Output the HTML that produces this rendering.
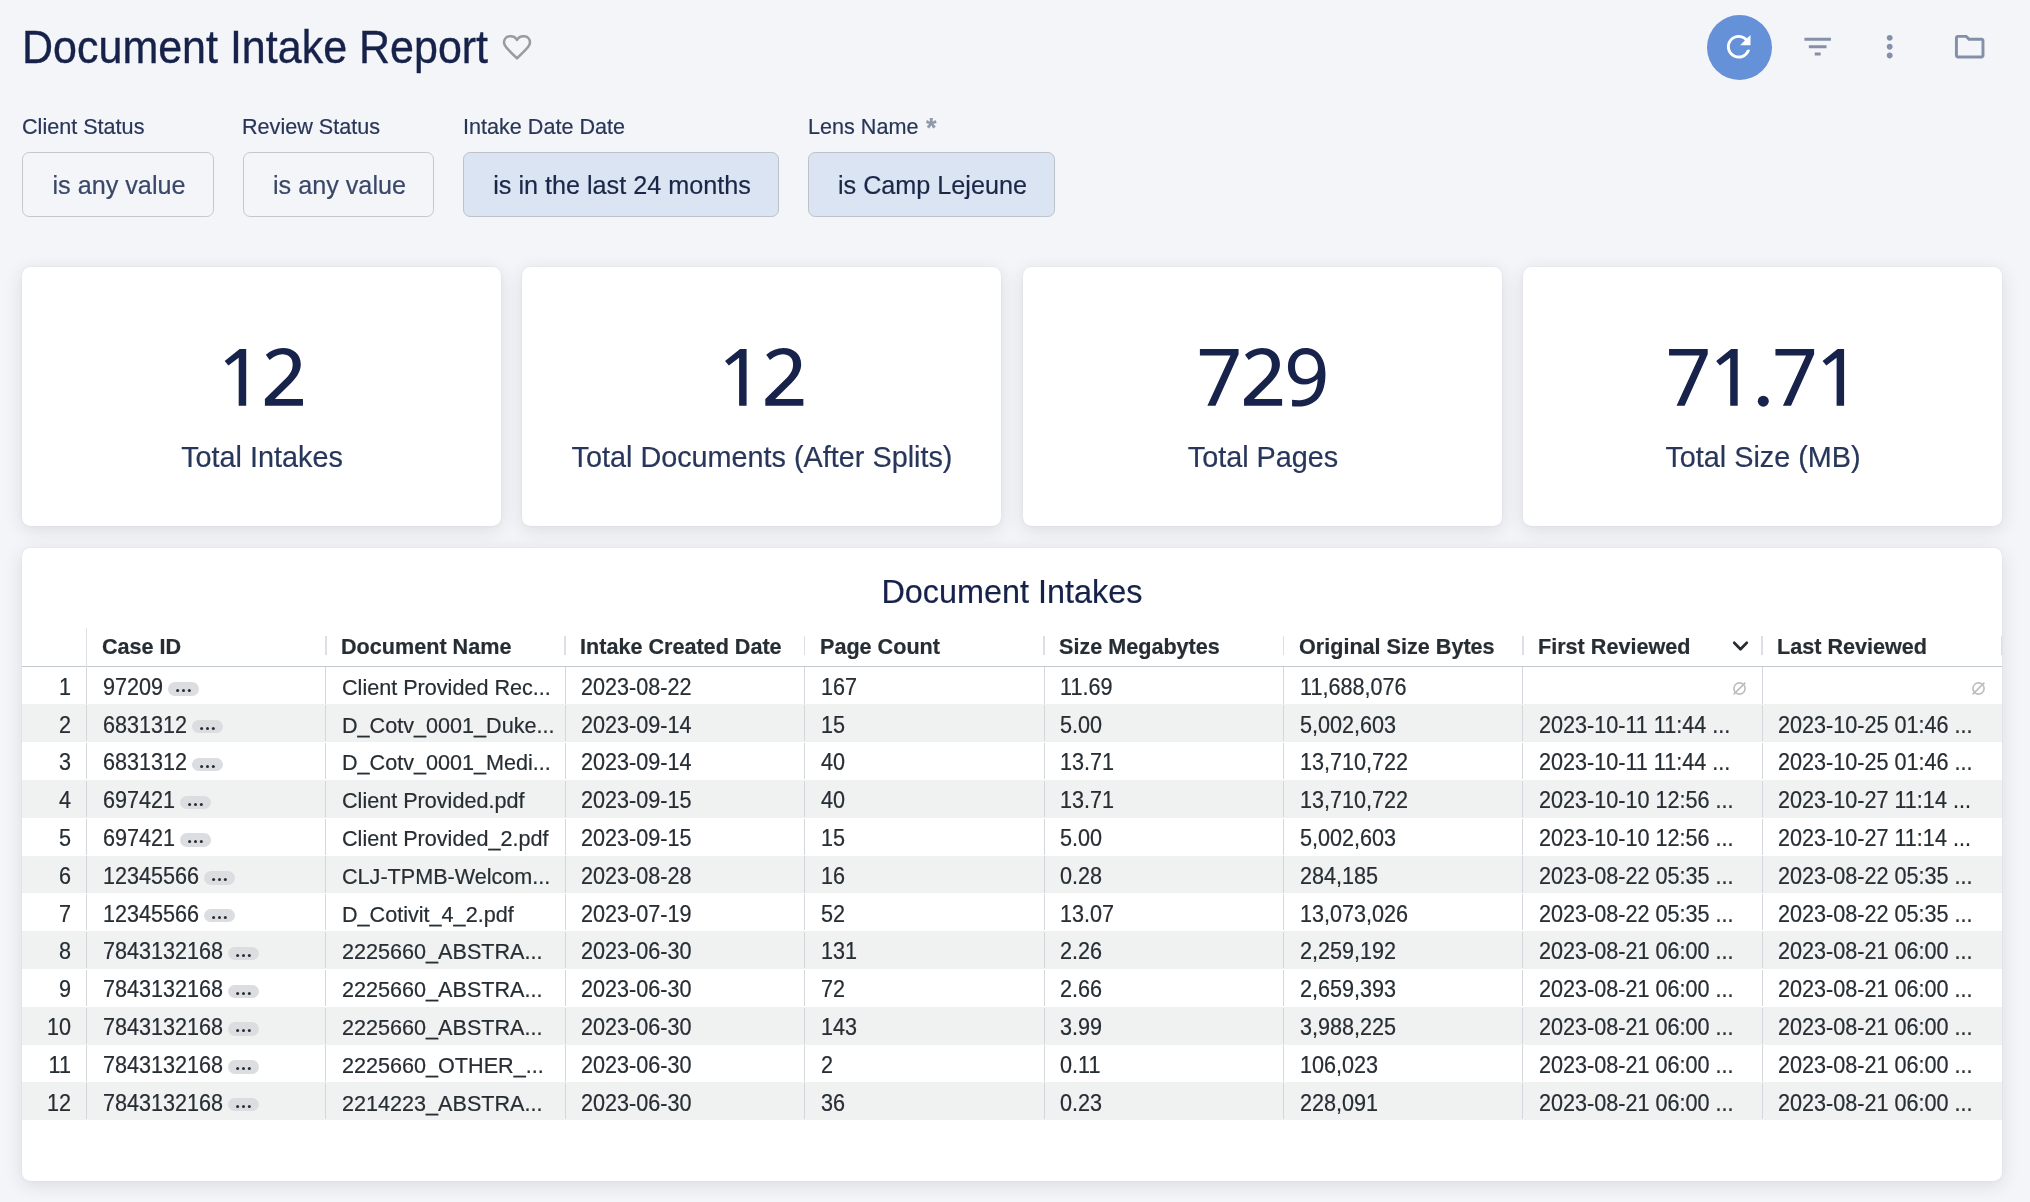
<!DOCTYPE html>
<html><head><meta charset="utf-8"><title>Document Intake Report</title>
<style>
*{box-sizing:border-box;margin:0;padding:0}
html,body{width:2030px;height:1202px;overflow:hidden;background:#f4f5f8;font-family:"Liberation Sans",sans-serif;}
.t{position:absolute;white-space:nowrap;will-change:transform;-webkit-text-stroke-width:0.2px;}
.abs{position:absolute;}
.card{position:absolute;background:#fff;border-radius:8.4px;box-shadow:0 4px 18px rgba(40,45,75,0.12),0 0 2px rgba(40,45,75,0.10);}
.fbox{position:absolute;border-radius:7.2px;border:1.8px solid #c3c7ce;}
.row{position:absolute;left:22px;width:1980px;}
.vs{position:absolute;width:1.1px;background:#d3d7db;}
</style></head>
<body>
<div class="t " style="left:22.20px;top:26.60px;font-size:43.0px;line-height:43.0px;color:#17224a;font-weight:normal;transform:scaleY(1.055);transform-origin:0 36.40px;-webkit-text-stroke:0.35px #17224a;">Document Intake Report</div>
<svg class="abs" style="left:502px;top:33px" width="30" height="28" viewBox="0 0 30 28"><path d="M15 7.0 C13.4 4.0 10.2 3.0 7.4 3.3 C3.8 3.7 2.0 6.6 2.0 9.6 C2.0 12.2 3.4 14.2 15 25.3 C26.6 14.2 28.0 12.2 28.0 9.6 C28.0 6.6 26.2 3.7 22.6 3.3 C19.8 3.0 16.6 4.0 15 7.0 Z" fill="none" stroke="#9b9b9b" stroke-width="2.6" stroke-linejoin="round"/></svg>
<div class="abs" style="left:1707px;top:15px;width:65px;height:65px;border-radius:50%;background:#6591d8"></div>
<svg class="abs" style="left:1721.00px;top:28.70px" width="35.40" height="35.40" viewBox="0 0 24 24"><path fill="#fff" d="M17.65 6.35C16.2 4.9 14.21 4 12 4c-4.42 0-7.99 3.58-7.99 8s3.57 8 7.99 8c3.73 0 6.840-2.55 7.73-6h-2.08c-.82 2.33-3.04 4-5.65 4-3.31 0-6-2.69-6-6s2.69-6 6-6c1.66 0 3.14.69 4.22 1.78L13 11h7V4l-2.35 2.35z"/></svg>
<svg class="abs" style="left:1800.20px;top:29.20px" width="35.40" height="35.40" viewBox="0 0 24 24"><path fill="#8490a8" d="M10 18h4v-2h-4v2zM3 6v2h18V6H3zm3 7h12v-2H6v2z"/></svg>
<svg class="abs" style="left:1872.30px;top:29.30px" width="35.40" height="35.40" viewBox="0 0 24 24"><path fill="#8490a8" d="M12 8c1.1 0 2-.9 2-2s-.9-2-2-2-2 .9-2 2 .9 2 2 2zm0 2c-1.1 0-2 .9-2 2s.9 2 2 2 2-.9 2-2-.9-2-2-2zm0 6c-1.1 0-2 .9-2 2s.9 2 2 2 2-.9 2-2-.9-2-2-2z"/></svg>
<svg class="abs" style="left:1952.30px;top:29.30px" width="35.40" height="35.40" viewBox="0 0 24 24"><path fill="#8490a8" d="M9.17 6l2 2H20v10H4V6h5.17M10 4H4c-1.1 0-1.99.9-1.99 2L2 18c0 1.1.9 2 2 2h16c1.1 0 2-.9 2-2V8c0-1.1-.9-2-2-2h-8l-2-2z"/></svg>
<div class="t " style="left:21.60px;top:116.02px;font-size:21.6px;line-height:21.6px;color:#283658;font-weight:normal;transform:scaleY(1.045);transform-origin:0 18.28px;">Client Status</div>
<div class="t " style="left:242.00px;top:116.02px;font-size:21.6px;line-height:21.6px;color:#283658;font-weight:normal;transform:scaleY(1.045);transform-origin:0 18.28px;">Review Status</div>
<div class="t " style="left:462.80px;top:116.02px;font-size:21.6px;line-height:21.6px;color:#283658;font-weight:normal;transform:scaleY(1.045);transform-origin:0 18.28px;">Intake Date Date</div>
<div class="t " style="left:807.80px;top:116.02px;font-size:21.6px;line-height:21.6px;color:#283658;font-weight:normal;transform:scaleY(1.045);transform-origin:0 18.28px;">Lens Name</div>
<div class="t " style="left:926.00px;top:114.64px;font-size:27px;line-height:27px;color:#8f98ab;font-weight:bold;">*</div>
<div class="fbox" style="left:22px;top:152px;width:192px;height:65px;background:transparent;border-color:#c3c7ce"></div>
<div class="t" style="left:22.80px;width:192px;text-align:center;top:173.27px;font-size:25.2px;line-height:25.2px;color:#394868;font-weight:normal;transform:scaleY(1.045);transform-origin:0 21.33px;">is any value</div>
<div class="fbox" style="left:243px;top:152px;width:191px;height:65px;background:transparent;border-color:#c3c7ce"></div>
<div class="t" style="left:243.80px;width:191px;text-align:center;top:173.27px;font-size:25.2px;line-height:25.2px;color:#394868;font-weight:normal;transform:scaleY(1.045);transform-origin:0 21.33px;">is any value</div>
<div class="fbox" style="left:463px;top:152px;width:316px;height:65px;background:#dbe4f3;border-color:#bdc1c8"></div>
<div class="t" style="left:463.80px;width:316px;text-align:center;top:173.27px;font-size:25.2px;line-height:25.2px;color:#1a2747;font-weight:normal;transform:scaleY(1.045);transform-origin:0 21.33px;">is in the last 24 months</div>
<div class="fbox" style="left:808px;top:152px;width:247px;height:65px;background:#dbe4f3;border-color:#bdc1c8"></div>
<div class="t" style="left:808.80px;width:247px;text-align:center;top:173.27px;font-size:25.2px;line-height:25.2px;color:#1a2747;font-weight:normal;transform:scaleY(1.045);transform-origin:0 21.33px;">is Camp Lejeune</div>
<div class="card" style="left:22.00px;top:267px;width:478.8px;height:259px"></div>
<div class="t" style="left:26.70px;width:470px;text-align:center;top:442.62px;font-size:28.8px;line-height:28.8px;color:#27365a;font-weight:normal;transform:scaleY(1.045);transform-origin:0 24.38px;">Total Intakes</div>
<div class="card" style="left:522.40px;top:267px;width:478.8px;height:259px"></div>
<div class="t" style="left:527.10px;width:470px;text-align:center;top:442.62px;font-size:28.8px;line-height:28.8px;color:#27365a;font-weight:normal;transform:scaleY(1.045);transform-origin:0 24.38px;">Total Documents (After Splits)</div>
<div class="card" style="left:1022.80px;top:267px;width:478.8px;height:259px"></div>
<div class="t" style="left:1027.50px;width:470px;text-align:center;top:442.62px;font-size:28.8px;line-height:28.8px;color:#27365a;font-weight:normal;transform:scaleY(1.045);transform-origin:0 24.38px;">Total Pages</div>
<div class="card" style="left:1523.20px;top:267px;width:478.8px;height:259px"></div>
<div class="t" style="left:1527.90px;width:470px;text-align:center;top:442.62px;font-size:28.8px;line-height:28.8px;color:#27365a;font-weight:normal;transform:scaleY(1.045);transform-origin:0 24.38px;">Total Size (MB)</div>
<svg class="abs" style="left:0;top:0" width="2030" height="1202" viewBox="0 0 2030 1202"><g fill="#17234a" fill-rule="evenodd"><path transform="translate(246.19 405.81) scale(0.06238)" d="M-105 -910 L0 -910 L0 0 L-120 0 L-120 -770 L-285 -645 L-345 -720 Z"/><path transform="translate(264.91 405.81) scale(0.06238)" d="M0 0 L610 0 L610 -110 L160 -110 L420 -365 C530 -475 575 -565 575 -665 C575 -830 450 -925 290 -925 C190 -925 100 -885 15 -820 L75 -735 C150 -790 210 -825 280 -825 C380 -825 445 -765 445 -665 C445 -575 410 -515 350 -455 L0 -110 Z"/><path transform="translate(746.59 405.81) scale(0.06238)" d="M-105 -910 L0 -910 L0 0 L-120 0 L-120 -770 L-285 -645 L-345 -720 Z"/><path transform="translate(765.31 405.81) scale(0.06238)" d="M0 0 L610 0 L610 -110 L160 -110 L420 -365 C530 -475 575 -565 575 -665 C575 -830 450 -925 290 -925 C190 -925 100 -885 15 -820 L75 -735 C150 -790 210 -825 280 -825 C380 -825 445 -765 445 -665 C445 -575 410 -515 350 -455 L0 -110 Z"/><path transform="translate(1199.90 349.00) scale(0.06238)" d="M0 0 L620 0 L620 85 L250 910 L120 910 L490 105 L0 105 Z"/><path transform="translate(1244.05 405.81) scale(0.06238)" d="M0 0 L610 0 L610 -110 L160 -110 L420 -365 C530 -475 575 -565 575 -665 C575 -830 450 -925 290 -925 C190 -925 100 -885 15 -820 L75 -735 C150 -790 210 -825 280 -825 C380 -825 445 -765 445 -665 C445 -575 410 -515 350 -455 L0 -110 Z"/><path transform="translate(1292.08 406.13) scale(0.06238)" d="M0 0 C45 5 75 7 105 7 C385 0 535 -180 535 -520 C535 -770 405 -930 220 -930 C45 -930 -67 -800 -67 -630 C-67 -460 35 -345 190 -345 C275 -345 355 -380 410 -435 C400 -190 285 -95 95 -95 C60 -95 30 -98 0 -103 Z M220 -830 C115 -830 47 -760 47 -630 C47 -510 110 -435 215 -435 C335 -435 415 -515 415 -610 C415 -750 330 -830 220 -830 Z"/><path transform="translate(1669.05 349.05) scale(0.06238)" d="M0 0 L620 0 L620 85 L250 910 L120 910 L490 105 L0 105 Z"/><path transform="translate(1737.69 405.83) scale(0.06238)" d="M-105 -910 L0 -910 L0 0 L-120 0 L-120 -770 L-285 -645 L-345 -720 Z"/><circle cx="1763.28" cy="401.2" r="5.5"/><path transform="translate(1775.45 349.05) scale(0.06238)" d="M0 0 L620 0 L620 85 L250 910 L120 910 L490 105 L0 105 Z"/><path transform="translate(1844.09 405.83) scale(0.06238)" d="M-105 -910 L0 -910 L0 0 L-120 0 L-120 -770 L-285 -645 L-345 -720 Z"/></g></svg>
<div class="card" style="left:22px;top:547.6px;width:1980px;height:633.6px"></div>
<div class="t" style="left:712.00px;width:600px;text-align:center;top:576.47px;font-size:32.4px;line-height:32.4px;color:#17224a;font-weight:normal;transform:scaleY(1.02);transform-origin:0 27.43px;">Document Intakes</div>
<div class="row" style="top:704.40px;height:37.80px;background:#f0f2f2"></div>
<div class="row" style="top:780.00px;height:37.80px;background:#f0f2f2"></div>
<div class="row" style="top:855.60px;height:37.80px;background:#f0f2f2"></div>
<div class="row" style="top:931.20px;height:37.80px;background:#f0f2f2"></div>
<div class="row" style="top:1006.80px;height:37.80px;background:#f0f2f2"></div>
<div class="row" style="top:1082.40px;height:37.80px;background:#f0f2f2"></div>
<div class="abs" style="left:22px;top:665.8px;width:1980px;height:1.2px;background:#c3c8ce"></div>
<div class="vs" style="left:85.90px;top:667.40px;height:36.20px"></div>
<div class="vs" style="left:85.90px;top:705.20px;height:36.20px"></div>
<div class="vs" style="left:85.90px;top:743.00px;height:36.20px"></div>
<div class="vs" style="left:85.90px;top:780.80px;height:36.20px"></div>
<div class="vs" style="left:85.90px;top:818.60px;height:36.20px"></div>
<div class="vs" style="left:85.90px;top:856.40px;height:36.20px"></div>
<div class="vs" style="left:85.90px;top:894.20px;height:36.20px"></div>
<div class="vs" style="left:85.90px;top:932.00px;height:36.20px"></div>
<div class="vs" style="left:85.90px;top:969.80px;height:36.20px"></div>
<div class="vs" style="left:85.90px;top:1007.60px;height:36.20px"></div>
<div class="vs" style="left:85.90px;top:1045.40px;height:36.20px"></div>
<div class="vs" style="left:85.90px;top:1083.20px;height:36.20px"></div>
<div class="vs" style="left:325.30px;top:667.40px;height:36.20px"></div>
<div class="vs" style="left:325.30px;top:705.20px;height:36.20px"></div>
<div class="vs" style="left:325.30px;top:743.00px;height:36.20px"></div>
<div class="vs" style="left:325.30px;top:780.80px;height:36.20px"></div>
<div class="vs" style="left:325.30px;top:818.60px;height:36.20px"></div>
<div class="vs" style="left:325.30px;top:856.40px;height:36.20px"></div>
<div class="vs" style="left:325.30px;top:894.20px;height:36.20px"></div>
<div class="vs" style="left:325.30px;top:932.00px;height:36.20px"></div>
<div class="vs" style="left:325.30px;top:969.80px;height:36.20px"></div>
<div class="vs" style="left:325.30px;top:1007.60px;height:36.20px"></div>
<div class="vs" style="left:325.30px;top:1045.40px;height:36.20px"></div>
<div class="vs" style="left:325.30px;top:1083.20px;height:36.20px"></div>
<div class="vs" style="left:564.70px;top:667.40px;height:36.20px"></div>
<div class="vs" style="left:564.70px;top:705.20px;height:36.20px"></div>
<div class="vs" style="left:564.70px;top:743.00px;height:36.20px"></div>
<div class="vs" style="left:564.70px;top:780.80px;height:36.20px"></div>
<div class="vs" style="left:564.70px;top:818.60px;height:36.20px"></div>
<div class="vs" style="left:564.70px;top:856.40px;height:36.20px"></div>
<div class="vs" style="left:564.70px;top:894.20px;height:36.20px"></div>
<div class="vs" style="left:564.70px;top:932.00px;height:36.20px"></div>
<div class="vs" style="left:564.70px;top:969.80px;height:36.20px"></div>
<div class="vs" style="left:564.70px;top:1007.60px;height:36.20px"></div>
<div class="vs" style="left:564.70px;top:1045.40px;height:36.20px"></div>
<div class="vs" style="left:564.70px;top:1083.20px;height:36.20px"></div>
<div class="vs" style="left:804.10px;top:667.40px;height:36.20px"></div>
<div class="vs" style="left:804.10px;top:705.20px;height:36.20px"></div>
<div class="vs" style="left:804.10px;top:743.00px;height:36.20px"></div>
<div class="vs" style="left:804.10px;top:780.80px;height:36.20px"></div>
<div class="vs" style="left:804.10px;top:818.60px;height:36.20px"></div>
<div class="vs" style="left:804.10px;top:856.40px;height:36.20px"></div>
<div class="vs" style="left:804.10px;top:894.20px;height:36.20px"></div>
<div class="vs" style="left:804.10px;top:932.00px;height:36.20px"></div>
<div class="vs" style="left:804.10px;top:969.80px;height:36.20px"></div>
<div class="vs" style="left:804.10px;top:1007.60px;height:36.20px"></div>
<div class="vs" style="left:804.10px;top:1045.40px;height:36.20px"></div>
<div class="vs" style="left:804.10px;top:1083.20px;height:36.20px"></div>
<div class="vs" style="left:1043.50px;top:667.40px;height:36.20px"></div>
<div class="vs" style="left:1043.50px;top:705.20px;height:36.20px"></div>
<div class="vs" style="left:1043.50px;top:743.00px;height:36.20px"></div>
<div class="vs" style="left:1043.50px;top:780.80px;height:36.20px"></div>
<div class="vs" style="left:1043.50px;top:818.60px;height:36.20px"></div>
<div class="vs" style="left:1043.50px;top:856.40px;height:36.20px"></div>
<div class="vs" style="left:1043.50px;top:894.20px;height:36.20px"></div>
<div class="vs" style="left:1043.50px;top:932.00px;height:36.20px"></div>
<div class="vs" style="left:1043.50px;top:969.80px;height:36.20px"></div>
<div class="vs" style="left:1043.50px;top:1007.60px;height:36.20px"></div>
<div class="vs" style="left:1043.50px;top:1045.40px;height:36.20px"></div>
<div class="vs" style="left:1043.50px;top:1083.20px;height:36.20px"></div>
<div class="vs" style="left:1282.90px;top:667.40px;height:36.20px"></div>
<div class="vs" style="left:1282.90px;top:705.20px;height:36.20px"></div>
<div class="vs" style="left:1282.90px;top:743.00px;height:36.20px"></div>
<div class="vs" style="left:1282.90px;top:780.80px;height:36.20px"></div>
<div class="vs" style="left:1282.90px;top:818.60px;height:36.20px"></div>
<div class="vs" style="left:1282.90px;top:856.40px;height:36.20px"></div>
<div class="vs" style="left:1282.90px;top:894.20px;height:36.20px"></div>
<div class="vs" style="left:1282.90px;top:932.00px;height:36.20px"></div>
<div class="vs" style="left:1282.90px;top:969.80px;height:36.20px"></div>
<div class="vs" style="left:1282.90px;top:1007.60px;height:36.20px"></div>
<div class="vs" style="left:1282.90px;top:1045.40px;height:36.20px"></div>
<div class="vs" style="left:1282.90px;top:1083.20px;height:36.20px"></div>
<div class="vs" style="left:1522.30px;top:667.40px;height:36.20px"></div>
<div class="vs" style="left:1522.30px;top:705.20px;height:36.20px"></div>
<div class="vs" style="left:1522.30px;top:743.00px;height:36.20px"></div>
<div class="vs" style="left:1522.30px;top:780.80px;height:36.20px"></div>
<div class="vs" style="left:1522.30px;top:818.60px;height:36.20px"></div>
<div class="vs" style="left:1522.30px;top:856.40px;height:36.20px"></div>
<div class="vs" style="left:1522.30px;top:894.20px;height:36.20px"></div>
<div class="vs" style="left:1522.30px;top:932.00px;height:36.20px"></div>
<div class="vs" style="left:1522.30px;top:969.80px;height:36.20px"></div>
<div class="vs" style="left:1522.30px;top:1007.60px;height:36.20px"></div>
<div class="vs" style="left:1522.30px;top:1045.40px;height:36.20px"></div>
<div class="vs" style="left:1522.30px;top:1083.20px;height:36.20px"></div>
<div class="vs" style="left:1761.70px;top:667.40px;height:36.20px"></div>
<div class="vs" style="left:1761.70px;top:705.20px;height:36.20px"></div>
<div class="vs" style="left:1761.70px;top:743.00px;height:36.20px"></div>
<div class="vs" style="left:1761.70px;top:780.80px;height:36.20px"></div>
<div class="vs" style="left:1761.70px;top:818.60px;height:36.20px"></div>
<div class="vs" style="left:1761.70px;top:856.40px;height:36.20px"></div>
<div class="vs" style="left:1761.70px;top:894.20px;height:36.20px"></div>
<div class="vs" style="left:1761.70px;top:932.00px;height:36.20px"></div>
<div class="vs" style="left:1761.70px;top:969.80px;height:36.20px"></div>
<div class="vs" style="left:1761.70px;top:1007.60px;height:36.20px"></div>
<div class="vs" style="left:1761.70px;top:1045.40px;height:36.20px"></div>
<div class="vs" style="left:1761.70px;top:1083.20px;height:36.20px"></div>
<div class="vs" style="left:85.50px;top:627.5px;width:1.8px;height:40.10px;background:#dcdfe3"></div>
<div class="vs" style="left:324.90px;top:636px;width:1.8px;height:18.60px;background:#dcdfe3"></div>
<div class="vs" style="left:564.30px;top:636px;width:1.8px;height:18.60px;background:#dcdfe3"></div>
<div class="vs" style="left:803.70px;top:636px;width:1.8px;height:18.60px;background:#dcdfe3"></div>
<div class="vs" style="left:1043.10px;top:636px;width:1.8px;height:18.60px;background:#dcdfe3"></div>
<div class="vs" style="left:1282.50px;top:636px;width:1.8px;height:18.60px;background:#dcdfe3"></div>
<div class="vs" style="left:1521.90px;top:636px;width:1.8px;height:18.60px;background:#dcdfe3"></div>
<div class="vs" style="left:1761.30px;top:636px;width:1.8px;height:18.60px;background:#dcdfe3"></div>
<div class="vs" style="left:2000.70px;top:636px;width:1.8px;height:18.60px;background:#dcdfe3"></div>
<div class="t " style="left:101.60px;top:635.72px;font-size:21.6px;line-height:21.6px;color:#262d33;font-weight:bold;transform:scaleY(1.06);transform-origin:0 18.28px;">Case ID</div>
<div class="t " style="left:341.00px;top:635.72px;font-size:21.6px;line-height:21.6px;color:#262d33;font-weight:bold;transform:scaleY(1.06);transform-origin:0 18.28px;">Document Name</div>
<div class="t " style="left:580.40px;top:635.72px;font-size:21.6px;line-height:21.6px;color:#262d33;font-weight:bold;transform:scaleY(1.06);transform-origin:0 18.28px;">Intake Created Date</div>
<div class="t " style="left:819.80px;top:635.72px;font-size:21.6px;line-height:21.6px;color:#262d33;font-weight:bold;transform:scaleY(1.06);transform-origin:0 18.28px;">Page Count</div>
<div class="t " style="left:1059.20px;top:635.72px;font-size:21.6px;line-height:21.6px;color:#262d33;font-weight:bold;transform:scaleY(1.06);transform-origin:0 18.28px;">Size Megabytes</div>
<div class="t " style="left:1298.60px;top:635.72px;font-size:21.6px;line-height:21.6px;color:#262d33;font-weight:bold;transform:scaleY(1.06);transform-origin:0 18.28px;">Original Size Bytes</div>
<div class="t " style="left:1538.00px;top:635.72px;font-size:21.6px;line-height:21.6px;color:#262d33;font-weight:bold;transform:scaleY(1.06);transform-origin:0 18.28px;">First Reviewed</div>
<div class="t " style="left:1777.40px;top:635.72px;font-size:21.6px;line-height:21.6px;color:#262d33;font-weight:bold;transform:scaleY(1.06);transform-origin:0 18.28px;">Last Reviewed</div>
<svg class="abs" style="left:1731px;top:640px" width="19" height="14" viewBox="0 0 19 14"><path d="M3.2 2.8 L9.5 9.2 L15.8 2.8" fill="none" stroke="#262d33" stroke-width="2.7" stroke-linecap="round" stroke-linejoin="round"/></svg>
<div class="t" style="left:23.2px;width:48px;text-align:right;top:676.82px;font-size:21.6px;line-height:21.6px;color:#262d33;transform:scaleY(1.08);transform-origin:0 18.28px">1</div>
<div class="t " style="left:102.60px;top:676.82px;font-size:21.6px;line-height:21.6px;color:#262d33;font-weight:normal;transform:scaleY(1.08);transform-origin:0 18.28px;">97209</div>
<div class="abs" style="left:167.65px;top:682.20px;width:31px;height:13.4px;border-radius:7px;background:#dcdde1"></div>
<svg class="abs" style="left:167.65px;top:682.20px" width="31" height="14" viewBox="0 0 31 14"><circle cx="9.6" cy="8.6" r="1.5" fill="#262d33"/><circle cx="15.5" cy="8.6" r="1.5" fill="#262d33"/><circle cx="21.3" cy="8.6" r="1.5" fill="#262d33"/></svg>
<div class="t " style="left:342.00px;top:676.82px;font-size:21.6px;line-height:21.6px;color:#262d33;font-weight:normal;transform:scaleY(1.04);transform-origin:0 18.28px;">Client Provided Rec...</div>
<div class="t " style="left:581.40px;top:676.82px;font-size:21.6px;line-height:21.6px;color:#262d33;font-weight:normal;transform:scaleY(1.08);transform-origin:0 18.28px;">2023-08-22</div>
<div class="t " style="left:820.80px;top:676.82px;font-size:21.6px;line-height:21.6px;color:#262d33;font-weight:normal;transform:scaleY(1.08);transform-origin:0 18.28px;">167</div>
<div class="t " style="left:1060.20px;top:676.82px;font-size:21.6px;line-height:21.6px;color:#262d33;font-weight:normal;transform:scaleY(1.08);transform-origin:0 18.28px;">11.69</div>
<div class="t " style="left:1299.60px;top:676.82px;font-size:21.6px;line-height:21.6px;color:#262d33;font-weight:normal;transform:scaleY(1.08);transform-origin:0 18.28px;">11,688,076</div>
<svg class="abs" style="left:1731.90px;top:680.70px" width="15" height="15" viewBox="0 0 15 15"><circle cx="7.5" cy="7.5" r="5.6" fill="none" stroke="#bdbdbd" stroke-width="1.6"/><path d="M1.6 13.4 L13.4 1.6" stroke="#bdbdbd" stroke-width="1.6"/></svg>
<svg class="abs" style="left:1971.30px;top:680.70px" width="15" height="15" viewBox="0 0 15 15"><circle cx="7.5" cy="7.5" r="5.6" fill="none" stroke="#bdbdbd" stroke-width="1.6"/><path d="M1.6 13.4 L13.4 1.6" stroke="#bdbdbd" stroke-width="1.6"/></svg>
<div class="t" style="left:23.2px;width:48px;text-align:right;top:714.62px;font-size:21.6px;line-height:21.6px;color:#262d33;transform:scaleY(1.08);transform-origin:0 18.28px">2</div>
<div class="t " style="left:102.60px;top:714.62px;font-size:21.6px;line-height:21.6px;color:#262d33;font-weight:normal;transform:scaleY(1.08);transform-origin:0 18.28px;">6831312</div>
<div class="abs" style="left:191.67px;top:720.00px;width:31px;height:13.4px;border-radius:7px;background:#dcdde1"></div>
<svg class="abs" style="left:191.67px;top:720.00px" width="31" height="14" viewBox="0 0 31 14"><circle cx="9.6" cy="8.6" r="1.5" fill="#262d33"/><circle cx="15.5" cy="8.6" r="1.5" fill="#262d33"/><circle cx="21.3" cy="8.6" r="1.5" fill="#262d33"/></svg>
<div class="t " style="left:342.00px;top:714.62px;font-size:21.6px;line-height:21.6px;color:#262d33;font-weight:normal;transform:scaleY(1.04);transform-origin:0 18.28px;">D_Cotv_0001_Duke...</div>
<div class="t " style="left:581.40px;top:714.62px;font-size:21.6px;line-height:21.6px;color:#262d33;font-weight:normal;transform:scaleY(1.08);transform-origin:0 18.28px;">2023-09-14</div>
<div class="t " style="left:820.80px;top:714.62px;font-size:21.6px;line-height:21.6px;color:#262d33;font-weight:normal;transform:scaleY(1.08);transform-origin:0 18.28px;">15</div>
<div class="t " style="left:1060.20px;top:714.62px;font-size:21.6px;line-height:21.6px;color:#262d33;font-weight:normal;transform:scaleY(1.08);transform-origin:0 18.28px;">5.00</div>
<div class="t " style="left:1299.60px;top:714.62px;font-size:21.6px;line-height:21.6px;color:#262d33;font-weight:normal;transform:scaleY(1.08);transform-origin:0 18.28px;">5,002,603</div>
<div class="t " style="left:1539.00px;top:714.62px;font-size:21.6px;line-height:21.6px;color:#262d33;font-weight:normal;transform:scaleY(1.08);transform-origin:0 18.28px;">2023-10-11 11:44 ...</div>
<div class="t " style="left:1778.40px;top:714.62px;font-size:21.6px;line-height:21.6px;color:#262d33;font-weight:normal;transform:scaleY(1.08);transform-origin:0 18.28px;">2023-10-25 01:46 ...</div>
<div class="t" style="left:23.2px;width:48px;text-align:right;top:752.42px;font-size:21.6px;line-height:21.6px;color:#262d33;transform:scaleY(1.08);transform-origin:0 18.28px">3</div>
<div class="t " style="left:102.60px;top:752.42px;font-size:21.6px;line-height:21.6px;color:#262d33;font-weight:normal;transform:scaleY(1.08);transform-origin:0 18.28px;">6831312</div>
<div class="abs" style="left:191.67px;top:757.80px;width:31px;height:13.4px;border-radius:7px;background:#dcdde1"></div>
<svg class="abs" style="left:191.67px;top:757.80px" width="31" height="14" viewBox="0 0 31 14"><circle cx="9.6" cy="8.6" r="1.5" fill="#262d33"/><circle cx="15.5" cy="8.6" r="1.5" fill="#262d33"/><circle cx="21.3" cy="8.6" r="1.5" fill="#262d33"/></svg>
<div class="t " style="left:342.00px;top:752.42px;font-size:21.6px;line-height:21.6px;color:#262d33;font-weight:normal;transform:scaleY(1.04);transform-origin:0 18.28px;">D_Cotv_0001_Medi...</div>
<div class="t " style="left:581.40px;top:752.42px;font-size:21.6px;line-height:21.6px;color:#262d33;font-weight:normal;transform:scaleY(1.08);transform-origin:0 18.28px;">2023-09-14</div>
<div class="t " style="left:820.80px;top:752.42px;font-size:21.6px;line-height:21.6px;color:#262d33;font-weight:normal;transform:scaleY(1.08);transform-origin:0 18.28px;">40</div>
<div class="t " style="left:1060.20px;top:752.42px;font-size:21.6px;line-height:21.6px;color:#262d33;font-weight:normal;transform:scaleY(1.08);transform-origin:0 18.28px;">13.71</div>
<div class="t " style="left:1299.60px;top:752.42px;font-size:21.6px;line-height:21.6px;color:#262d33;font-weight:normal;transform:scaleY(1.08);transform-origin:0 18.28px;">13,710,722</div>
<div class="t " style="left:1539.00px;top:752.42px;font-size:21.6px;line-height:21.6px;color:#262d33;font-weight:normal;transform:scaleY(1.08);transform-origin:0 18.28px;">2023-10-11 11:44 ...</div>
<div class="t " style="left:1778.40px;top:752.42px;font-size:21.6px;line-height:21.6px;color:#262d33;font-weight:normal;transform:scaleY(1.08);transform-origin:0 18.28px;">2023-10-25 01:46 ...</div>
<div class="t" style="left:23.2px;width:48px;text-align:right;top:790.22px;font-size:21.6px;line-height:21.6px;color:#262d33;transform:scaleY(1.08);transform-origin:0 18.28px">4</div>
<div class="t " style="left:102.60px;top:790.22px;font-size:21.6px;line-height:21.6px;color:#262d33;font-weight:normal;transform:scaleY(1.08);transform-origin:0 18.28px;">697421</div>
<div class="abs" style="left:179.66px;top:795.60px;width:31px;height:13.4px;border-radius:7px;background:#dcdde1"></div>
<svg class="abs" style="left:179.66px;top:795.60px" width="31" height="14" viewBox="0 0 31 14"><circle cx="9.6" cy="8.6" r="1.5" fill="#262d33"/><circle cx="15.5" cy="8.6" r="1.5" fill="#262d33"/><circle cx="21.3" cy="8.6" r="1.5" fill="#262d33"/></svg>
<div class="t " style="left:342.00px;top:790.22px;font-size:21.6px;line-height:21.6px;color:#262d33;font-weight:normal;transform:scaleY(1.04);transform-origin:0 18.28px;">Client Provided.pdf</div>
<div class="t " style="left:581.40px;top:790.22px;font-size:21.6px;line-height:21.6px;color:#262d33;font-weight:normal;transform:scaleY(1.08);transform-origin:0 18.28px;">2023-09-15</div>
<div class="t " style="left:820.80px;top:790.22px;font-size:21.6px;line-height:21.6px;color:#262d33;font-weight:normal;transform:scaleY(1.08);transform-origin:0 18.28px;">40</div>
<div class="t " style="left:1060.20px;top:790.22px;font-size:21.6px;line-height:21.6px;color:#262d33;font-weight:normal;transform:scaleY(1.08);transform-origin:0 18.28px;">13.71</div>
<div class="t " style="left:1299.60px;top:790.22px;font-size:21.6px;line-height:21.6px;color:#262d33;font-weight:normal;transform:scaleY(1.08);transform-origin:0 18.28px;">13,710,722</div>
<div class="t " style="left:1539.00px;top:790.22px;font-size:21.6px;line-height:21.6px;color:#262d33;font-weight:normal;transform:scaleY(1.08);transform-origin:0 18.28px;">2023-10-10 12:56 ...</div>
<div class="t " style="left:1778.40px;top:790.22px;font-size:21.6px;line-height:21.6px;color:#262d33;font-weight:normal;transform:scaleY(1.08);transform-origin:0 18.28px;">2023-10-27 11:14 ...</div>
<div class="t" style="left:23.2px;width:48px;text-align:right;top:828.02px;font-size:21.6px;line-height:21.6px;color:#262d33;transform:scaleY(1.08);transform-origin:0 18.28px">5</div>
<div class="t " style="left:102.60px;top:828.02px;font-size:21.6px;line-height:21.6px;color:#262d33;font-weight:normal;transform:scaleY(1.08);transform-origin:0 18.28px;">697421</div>
<div class="abs" style="left:179.66px;top:833.40px;width:31px;height:13.4px;border-radius:7px;background:#dcdde1"></div>
<svg class="abs" style="left:179.66px;top:833.40px" width="31" height="14" viewBox="0 0 31 14"><circle cx="9.6" cy="8.6" r="1.5" fill="#262d33"/><circle cx="15.5" cy="8.6" r="1.5" fill="#262d33"/><circle cx="21.3" cy="8.6" r="1.5" fill="#262d33"/></svg>
<div class="t " style="left:342.00px;top:828.02px;font-size:21.6px;line-height:21.6px;color:#262d33;font-weight:normal;transform:scaleY(1.04);transform-origin:0 18.28px;">Client Provided_2.pdf</div>
<div class="t " style="left:581.40px;top:828.02px;font-size:21.6px;line-height:21.6px;color:#262d33;font-weight:normal;transform:scaleY(1.08);transform-origin:0 18.28px;">2023-09-15</div>
<div class="t " style="left:820.80px;top:828.02px;font-size:21.6px;line-height:21.6px;color:#262d33;font-weight:normal;transform:scaleY(1.08);transform-origin:0 18.28px;">15</div>
<div class="t " style="left:1060.20px;top:828.02px;font-size:21.6px;line-height:21.6px;color:#262d33;font-weight:normal;transform:scaleY(1.08);transform-origin:0 18.28px;">5.00</div>
<div class="t " style="left:1299.60px;top:828.02px;font-size:21.6px;line-height:21.6px;color:#262d33;font-weight:normal;transform:scaleY(1.08);transform-origin:0 18.28px;">5,002,603</div>
<div class="t " style="left:1539.00px;top:828.02px;font-size:21.6px;line-height:21.6px;color:#262d33;font-weight:normal;transform:scaleY(1.08);transform-origin:0 18.28px;">2023-10-10 12:56 ...</div>
<div class="t " style="left:1778.40px;top:828.02px;font-size:21.6px;line-height:21.6px;color:#262d33;font-weight:normal;transform:scaleY(1.08);transform-origin:0 18.28px;">2023-10-27 11:14 ...</div>
<div class="t" style="left:23.2px;width:48px;text-align:right;top:865.82px;font-size:21.6px;line-height:21.6px;color:#262d33;transform:scaleY(1.08);transform-origin:0 18.28px">6</div>
<div class="t " style="left:102.60px;top:865.82px;font-size:21.6px;line-height:21.6px;color:#262d33;font-weight:normal;transform:scaleY(1.08);transform-origin:0 18.28px;">12345566</div>
<div class="abs" style="left:203.68px;top:871.20px;width:31px;height:13.4px;border-radius:7px;background:#dcdde1"></div>
<svg class="abs" style="left:203.68px;top:871.20px" width="31" height="14" viewBox="0 0 31 14"><circle cx="9.6" cy="8.6" r="1.5" fill="#262d33"/><circle cx="15.5" cy="8.6" r="1.5" fill="#262d33"/><circle cx="21.3" cy="8.6" r="1.5" fill="#262d33"/></svg>
<div class="t " style="left:342.00px;top:865.82px;font-size:21.6px;line-height:21.6px;color:#262d33;font-weight:normal;transform:scaleY(1.04);transform-origin:0 18.28px;">CLJ-TPMB-Welcom...</div>
<div class="t " style="left:581.40px;top:865.82px;font-size:21.6px;line-height:21.6px;color:#262d33;font-weight:normal;transform:scaleY(1.08);transform-origin:0 18.28px;">2023-08-28</div>
<div class="t " style="left:820.80px;top:865.82px;font-size:21.6px;line-height:21.6px;color:#262d33;font-weight:normal;transform:scaleY(1.08);transform-origin:0 18.28px;">16</div>
<div class="t " style="left:1060.20px;top:865.82px;font-size:21.6px;line-height:21.6px;color:#262d33;font-weight:normal;transform:scaleY(1.08);transform-origin:0 18.28px;">0.28</div>
<div class="t " style="left:1299.60px;top:865.82px;font-size:21.6px;line-height:21.6px;color:#262d33;font-weight:normal;transform:scaleY(1.08);transform-origin:0 18.28px;">284,185</div>
<div class="t " style="left:1539.00px;top:865.82px;font-size:21.6px;line-height:21.6px;color:#262d33;font-weight:normal;transform:scaleY(1.08);transform-origin:0 18.28px;">2023-08-22 05:35 ...</div>
<div class="t " style="left:1778.40px;top:865.82px;font-size:21.6px;line-height:21.6px;color:#262d33;font-weight:normal;transform:scaleY(1.08);transform-origin:0 18.28px;">2023-08-22 05:35 ...</div>
<div class="t" style="left:23.2px;width:48px;text-align:right;top:903.62px;font-size:21.6px;line-height:21.6px;color:#262d33;transform:scaleY(1.08);transform-origin:0 18.28px">7</div>
<div class="t " style="left:102.60px;top:903.62px;font-size:21.6px;line-height:21.6px;color:#262d33;font-weight:normal;transform:scaleY(1.08);transform-origin:0 18.28px;">12345566</div>
<div class="abs" style="left:203.68px;top:909.00px;width:31px;height:13.4px;border-radius:7px;background:#dcdde1"></div>
<svg class="abs" style="left:203.68px;top:909.00px" width="31" height="14" viewBox="0 0 31 14"><circle cx="9.6" cy="8.6" r="1.5" fill="#262d33"/><circle cx="15.5" cy="8.6" r="1.5" fill="#262d33"/><circle cx="21.3" cy="8.6" r="1.5" fill="#262d33"/></svg>
<div class="t " style="left:342.00px;top:903.62px;font-size:21.6px;line-height:21.6px;color:#262d33;font-weight:normal;transform:scaleY(1.04);transform-origin:0 18.28px;">D_Cotivit_4_2.pdf</div>
<div class="t " style="left:581.40px;top:903.62px;font-size:21.6px;line-height:21.6px;color:#262d33;font-weight:normal;transform:scaleY(1.08);transform-origin:0 18.28px;">2023-07-19</div>
<div class="t " style="left:820.80px;top:903.62px;font-size:21.6px;line-height:21.6px;color:#262d33;font-weight:normal;transform:scaleY(1.08);transform-origin:0 18.28px;">52</div>
<div class="t " style="left:1060.20px;top:903.62px;font-size:21.6px;line-height:21.6px;color:#262d33;font-weight:normal;transform:scaleY(1.08);transform-origin:0 18.28px;">13.07</div>
<div class="t " style="left:1299.60px;top:903.62px;font-size:21.6px;line-height:21.6px;color:#262d33;font-weight:normal;transform:scaleY(1.08);transform-origin:0 18.28px;">13,073,026</div>
<div class="t " style="left:1539.00px;top:903.62px;font-size:21.6px;line-height:21.6px;color:#262d33;font-weight:normal;transform:scaleY(1.08);transform-origin:0 18.28px;">2023-08-22 05:35 ...</div>
<div class="t " style="left:1778.40px;top:903.62px;font-size:21.6px;line-height:21.6px;color:#262d33;font-weight:normal;transform:scaleY(1.08);transform-origin:0 18.28px;">2023-08-22 05:35 ...</div>
<div class="t" style="left:23.2px;width:48px;text-align:right;top:941.42px;font-size:21.6px;line-height:21.6px;color:#262d33;transform:scaleY(1.08);transform-origin:0 18.28px">8</div>
<div class="t " style="left:102.60px;top:941.42px;font-size:21.6px;line-height:21.6px;color:#262d33;font-weight:normal;transform:scaleY(1.08);transform-origin:0 18.28px;">7843132168</div>
<div class="abs" style="left:227.70px;top:946.80px;width:31px;height:13.4px;border-radius:7px;background:#dcdde1"></div>
<svg class="abs" style="left:227.70px;top:946.80px" width="31" height="14" viewBox="0 0 31 14"><circle cx="9.6" cy="8.6" r="1.5" fill="#262d33"/><circle cx="15.5" cy="8.6" r="1.5" fill="#262d33"/><circle cx="21.3" cy="8.6" r="1.5" fill="#262d33"/></svg>
<div class="t " style="left:342.00px;top:941.42px;font-size:21.6px;line-height:21.6px;color:#262d33;font-weight:normal;transform:scaleY(1.04);transform-origin:0 18.28px;">2225660_ABSTRA...</div>
<div class="t " style="left:581.40px;top:941.42px;font-size:21.6px;line-height:21.6px;color:#262d33;font-weight:normal;transform:scaleY(1.08);transform-origin:0 18.28px;">2023-06-30</div>
<div class="t " style="left:820.80px;top:941.42px;font-size:21.6px;line-height:21.6px;color:#262d33;font-weight:normal;transform:scaleY(1.08);transform-origin:0 18.28px;">131</div>
<div class="t " style="left:1060.20px;top:941.42px;font-size:21.6px;line-height:21.6px;color:#262d33;font-weight:normal;transform:scaleY(1.08);transform-origin:0 18.28px;">2.26</div>
<div class="t " style="left:1299.60px;top:941.42px;font-size:21.6px;line-height:21.6px;color:#262d33;font-weight:normal;transform:scaleY(1.08);transform-origin:0 18.28px;">2,259,192</div>
<div class="t " style="left:1539.00px;top:941.42px;font-size:21.6px;line-height:21.6px;color:#262d33;font-weight:normal;transform:scaleY(1.08);transform-origin:0 18.28px;">2023-08-21 06:00 ...</div>
<div class="t " style="left:1778.40px;top:941.42px;font-size:21.6px;line-height:21.6px;color:#262d33;font-weight:normal;transform:scaleY(1.08);transform-origin:0 18.28px;">2023-08-21 06:00 ...</div>
<div class="t" style="left:23.2px;width:48px;text-align:right;top:979.22px;font-size:21.6px;line-height:21.6px;color:#262d33;transform:scaleY(1.08);transform-origin:0 18.28px">9</div>
<div class="t " style="left:102.60px;top:979.22px;font-size:21.6px;line-height:21.6px;color:#262d33;font-weight:normal;transform:scaleY(1.08);transform-origin:0 18.28px;">7843132168</div>
<div class="abs" style="left:227.70px;top:984.60px;width:31px;height:13.4px;border-radius:7px;background:#dcdde1"></div>
<svg class="abs" style="left:227.70px;top:984.60px" width="31" height="14" viewBox="0 0 31 14"><circle cx="9.6" cy="8.6" r="1.5" fill="#262d33"/><circle cx="15.5" cy="8.6" r="1.5" fill="#262d33"/><circle cx="21.3" cy="8.6" r="1.5" fill="#262d33"/></svg>
<div class="t " style="left:342.00px;top:979.22px;font-size:21.6px;line-height:21.6px;color:#262d33;font-weight:normal;transform:scaleY(1.04);transform-origin:0 18.28px;">2225660_ABSTRA...</div>
<div class="t " style="left:581.40px;top:979.22px;font-size:21.6px;line-height:21.6px;color:#262d33;font-weight:normal;transform:scaleY(1.08);transform-origin:0 18.28px;">2023-06-30</div>
<div class="t " style="left:820.80px;top:979.22px;font-size:21.6px;line-height:21.6px;color:#262d33;font-weight:normal;transform:scaleY(1.08);transform-origin:0 18.28px;">72</div>
<div class="t " style="left:1060.20px;top:979.22px;font-size:21.6px;line-height:21.6px;color:#262d33;font-weight:normal;transform:scaleY(1.08);transform-origin:0 18.28px;">2.66</div>
<div class="t " style="left:1299.60px;top:979.22px;font-size:21.6px;line-height:21.6px;color:#262d33;font-weight:normal;transform:scaleY(1.08);transform-origin:0 18.28px;">2,659,393</div>
<div class="t " style="left:1539.00px;top:979.22px;font-size:21.6px;line-height:21.6px;color:#262d33;font-weight:normal;transform:scaleY(1.08);transform-origin:0 18.28px;">2023-08-21 06:00 ...</div>
<div class="t " style="left:1778.40px;top:979.22px;font-size:21.6px;line-height:21.6px;color:#262d33;font-weight:normal;transform:scaleY(1.08);transform-origin:0 18.28px;">2023-08-21 06:00 ...</div>
<div class="t" style="left:23.2px;width:48px;text-align:right;top:1017.02px;font-size:21.6px;line-height:21.6px;color:#262d33;transform:scaleY(1.08);transform-origin:0 18.28px">10</div>
<div class="t " style="left:102.60px;top:1017.02px;font-size:21.6px;line-height:21.6px;color:#262d33;font-weight:normal;transform:scaleY(1.08);transform-origin:0 18.28px;">7843132168</div>
<div class="abs" style="left:227.70px;top:1022.40px;width:31px;height:13.4px;border-radius:7px;background:#dcdde1"></div>
<svg class="abs" style="left:227.70px;top:1022.40px" width="31" height="14" viewBox="0 0 31 14"><circle cx="9.6" cy="8.6" r="1.5" fill="#262d33"/><circle cx="15.5" cy="8.6" r="1.5" fill="#262d33"/><circle cx="21.3" cy="8.6" r="1.5" fill="#262d33"/></svg>
<div class="t " style="left:342.00px;top:1017.02px;font-size:21.6px;line-height:21.6px;color:#262d33;font-weight:normal;transform:scaleY(1.04);transform-origin:0 18.28px;">2225660_ABSTRA...</div>
<div class="t " style="left:581.40px;top:1017.02px;font-size:21.6px;line-height:21.6px;color:#262d33;font-weight:normal;transform:scaleY(1.08);transform-origin:0 18.28px;">2023-06-30</div>
<div class="t " style="left:820.80px;top:1017.02px;font-size:21.6px;line-height:21.6px;color:#262d33;font-weight:normal;transform:scaleY(1.08);transform-origin:0 18.28px;">143</div>
<div class="t " style="left:1060.20px;top:1017.02px;font-size:21.6px;line-height:21.6px;color:#262d33;font-weight:normal;transform:scaleY(1.08);transform-origin:0 18.28px;">3.99</div>
<div class="t " style="left:1299.60px;top:1017.02px;font-size:21.6px;line-height:21.6px;color:#262d33;font-weight:normal;transform:scaleY(1.08);transform-origin:0 18.28px;">3,988,225</div>
<div class="t " style="left:1539.00px;top:1017.02px;font-size:21.6px;line-height:21.6px;color:#262d33;font-weight:normal;transform:scaleY(1.08);transform-origin:0 18.28px;">2023-08-21 06:00 ...</div>
<div class="t " style="left:1778.40px;top:1017.02px;font-size:21.6px;line-height:21.6px;color:#262d33;font-weight:normal;transform:scaleY(1.08);transform-origin:0 18.28px;">2023-08-21 06:00 ...</div>
<div class="t" style="left:23.2px;width:48px;text-align:right;top:1054.82px;font-size:21.6px;line-height:21.6px;color:#262d33;transform:scaleY(1.08);transform-origin:0 18.28px">11</div>
<div class="t " style="left:102.60px;top:1054.82px;font-size:21.6px;line-height:21.6px;color:#262d33;font-weight:normal;transform:scaleY(1.08);transform-origin:0 18.28px;">7843132168</div>
<div class="abs" style="left:227.70px;top:1060.20px;width:31px;height:13.4px;border-radius:7px;background:#dcdde1"></div>
<svg class="abs" style="left:227.70px;top:1060.20px" width="31" height="14" viewBox="0 0 31 14"><circle cx="9.6" cy="8.6" r="1.5" fill="#262d33"/><circle cx="15.5" cy="8.6" r="1.5" fill="#262d33"/><circle cx="21.3" cy="8.6" r="1.5" fill="#262d33"/></svg>
<div class="t " style="left:342.00px;top:1054.82px;font-size:21.6px;line-height:21.6px;color:#262d33;font-weight:normal;transform:scaleY(1.04);transform-origin:0 18.28px;">2225660_OTHER_...</div>
<div class="t " style="left:581.40px;top:1054.82px;font-size:21.6px;line-height:21.6px;color:#262d33;font-weight:normal;transform:scaleY(1.08);transform-origin:0 18.28px;">2023-06-30</div>
<div class="t " style="left:820.80px;top:1054.82px;font-size:21.6px;line-height:21.6px;color:#262d33;font-weight:normal;transform:scaleY(1.08);transform-origin:0 18.28px;">2</div>
<div class="t " style="left:1060.20px;top:1054.82px;font-size:21.6px;line-height:21.6px;color:#262d33;font-weight:normal;transform:scaleY(1.08);transform-origin:0 18.28px;">0.11</div>
<div class="t " style="left:1299.60px;top:1054.82px;font-size:21.6px;line-height:21.6px;color:#262d33;font-weight:normal;transform:scaleY(1.08);transform-origin:0 18.28px;">106,023</div>
<div class="t " style="left:1539.00px;top:1054.82px;font-size:21.6px;line-height:21.6px;color:#262d33;font-weight:normal;transform:scaleY(1.08);transform-origin:0 18.28px;">2023-08-21 06:00 ...</div>
<div class="t " style="left:1778.40px;top:1054.82px;font-size:21.6px;line-height:21.6px;color:#262d33;font-weight:normal;transform:scaleY(1.08);transform-origin:0 18.28px;">2023-08-21 06:00 ...</div>
<div class="t" style="left:23.2px;width:48px;text-align:right;top:1092.62px;font-size:21.6px;line-height:21.6px;color:#262d33;transform:scaleY(1.08);transform-origin:0 18.28px">12</div>
<div class="t " style="left:102.60px;top:1092.62px;font-size:21.6px;line-height:21.6px;color:#262d33;font-weight:normal;transform:scaleY(1.08);transform-origin:0 18.28px;">7843132168</div>
<div class="abs" style="left:227.70px;top:1098.00px;width:31px;height:13.4px;border-radius:7px;background:#dcdde1"></div>
<svg class="abs" style="left:227.70px;top:1098.00px" width="31" height="14" viewBox="0 0 31 14"><circle cx="9.6" cy="8.6" r="1.5" fill="#262d33"/><circle cx="15.5" cy="8.6" r="1.5" fill="#262d33"/><circle cx="21.3" cy="8.6" r="1.5" fill="#262d33"/></svg>
<div class="t " style="left:342.00px;top:1092.62px;font-size:21.6px;line-height:21.6px;color:#262d33;font-weight:normal;transform:scaleY(1.04);transform-origin:0 18.28px;">2214223_ABSTRA...</div>
<div class="t " style="left:581.40px;top:1092.62px;font-size:21.6px;line-height:21.6px;color:#262d33;font-weight:normal;transform:scaleY(1.08);transform-origin:0 18.28px;">2023-06-30</div>
<div class="t " style="left:820.80px;top:1092.62px;font-size:21.6px;line-height:21.6px;color:#262d33;font-weight:normal;transform:scaleY(1.08);transform-origin:0 18.28px;">36</div>
<div class="t " style="left:1060.20px;top:1092.62px;font-size:21.6px;line-height:21.6px;color:#262d33;font-weight:normal;transform:scaleY(1.08);transform-origin:0 18.28px;">0.23</div>
<div class="t " style="left:1299.60px;top:1092.62px;font-size:21.6px;line-height:21.6px;color:#262d33;font-weight:normal;transform:scaleY(1.08);transform-origin:0 18.28px;">228,091</div>
<div class="t " style="left:1539.00px;top:1092.62px;font-size:21.6px;line-height:21.6px;color:#262d33;font-weight:normal;transform:scaleY(1.08);transform-origin:0 18.28px;">2023-08-21 06:00 ...</div>
<div class="t " style="left:1778.40px;top:1092.62px;font-size:21.6px;line-height:21.6px;color:#262d33;font-weight:normal;transform:scaleY(1.08);transform-origin:0 18.28px;">2023-08-21 06:00 ...</div>

</body></html>
